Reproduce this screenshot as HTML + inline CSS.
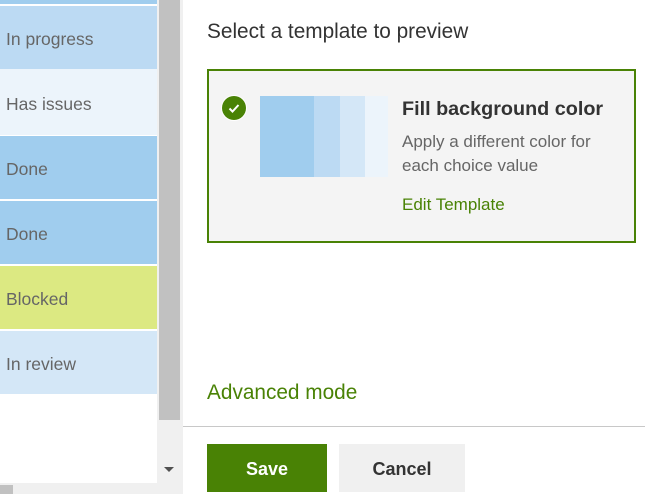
<!DOCTYPE html>
<html><head><style>
body{margin:0;width:645px;height:494px;overflow:hidden;background:#fff;font-family:"Segoe UI","Liberation Sans",sans-serif;position:relative}
.r{position:absolute;left:0;width:157px;height:63px;color:#666;font-size:17.5px;line-height:66px;padding-left:6px;box-sizing:border-box}
.a{position:absolute}
</style></head><body>
<div class="r" style="top:-59px;background:#a0cdee"></div>
<div class="r" style="top:6px;background:#bcdaf3;line-height:67px">In progress</div>
<div class="r" style="top:69px;height:66px;background:#ecf4fb;line-height:70px">Has issues</div>
<div class="r" style="top:136px;background:#a0cdee">Done</div>
<div class="r" style="top:201px;background:#a0cdee">Done</div>
<div class="r" style="top:266px;background:#dce982">Blocked</div>
<div class="r" style="top:331px;background:#d4e7f7">In review</div>
<div class="a" style="left:157px;top:0;width:26px;height:494px;background:#f0f0f0"></div>
<div class="a" style="left:159px;top:0;width:21px;height:420px;background:#c1c1c1"></div>
<div class="a" style="left:164px;top:467px;width:0;height:0;border-left:5px solid transparent;border-right:5px solid transparent;border-top:5px solid #505050"></div>
<div class="a" style="left:0;top:483px;width:157px;height:11px;background:#f0f0f0"></div>
<div class="a" style="left:0;top:485px;width:13px;height:9px;background:#c1c1c1"></div>
<div class="a" style="left:183px;top:426px;width:462px;height:1px;background:#c8c8c8"></div>
<div class="a" style="left:207px;top:20px;font-size:20.8px;color:#333">Select a template to preview</div>
<div class="a" style="left:207px;top:69px;width:429px;height:174px;box-sizing:border-box;border:2px solid #498205;background:#f4f4f4"></div>
<div class="a" style="left:222px;top:96px;width:24px;height:24px;border-radius:50%;background:#498205;box-shadow:0 0 0 1px #fff"><svg width="24" height="24"><path d="M7.5 12.5l3 3 6-6.5" stroke="#fff" stroke-width="2" fill="none"/></svg></div>
<div class="a" style="left:260px;top:96px;width:54px;height:81px;background:#a0cdee"></div>
<div class="a" style="left:314px;top:96px;width:26px;height:81px;background:#bcdaf3"></div>
<div class="a" style="left:340px;top:96px;width:25px;height:81px;background:#d4e7f7"></div>
<div class="a" style="left:365px;top:96px;width:23px;height:81px;background:#ecf4fb"></div>
<div class="a" style="left:402px;top:98px;font-size:19.8px;font-weight:bold;color:#333">Fill background color</div>
<div class="a" style="left:402px;top:130px;font-size:17px;line-height:24px;color:#666;width:222px">Apply a different color for each choice value</div>
<div class="a" style="left:402px;top:195px;font-size:17px;color:#498205">Edit Template</div>
<div class="a" style="left:207px;top:381px;font-size:20.8px;color:#498205">Advanced mode</div>
<div class="a" style="left:207px;top:444px;width:120px;height:48px;background:#498205;color:#fff;font-weight:bold;font-size:18px;line-height:50px;text-align:center">Save</div>
<div class="a" style="left:339px;top:444px;width:126px;height:48px;background:#f0f0f0;color:#333;font-weight:bold;font-size:18px;line-height:50px;text-align:center">Cancel</div>
</body></html>
